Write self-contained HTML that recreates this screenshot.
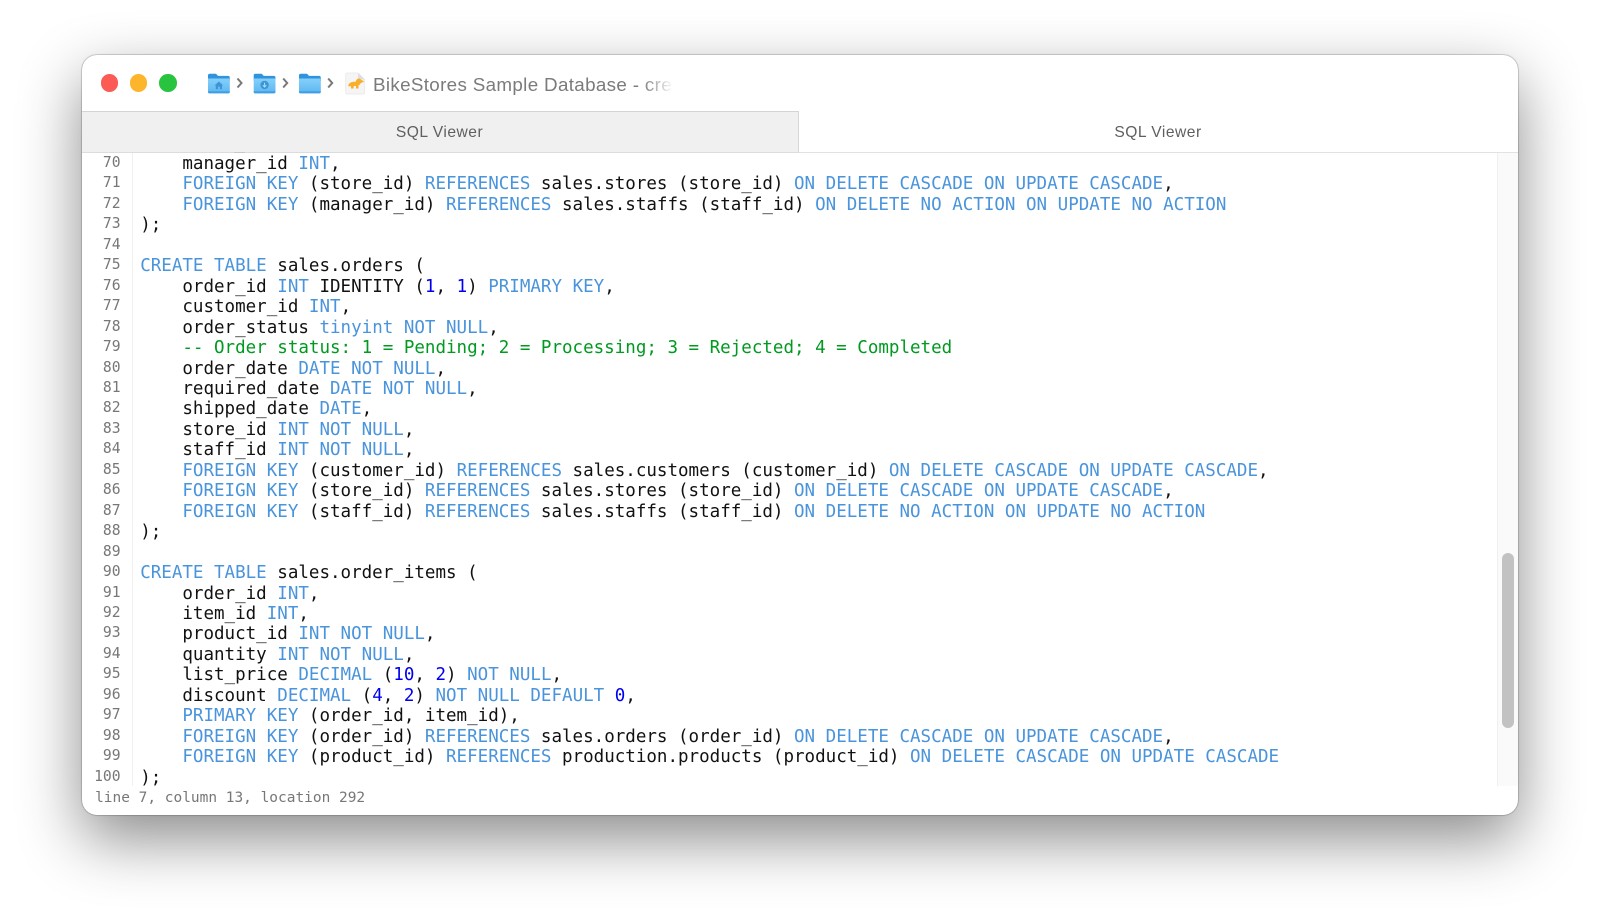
<!DOCTYPE html>
<html><head><meta charset="utf-8">
<style>
html,body{margin:0;padding:0;width:1600px;height:923px;overflow:hidden;background:#fff}
#win{position:absolute;left:81.6px;top:55px;width:1436.9px;height:760px;background:#fff;border-radius:15px;box-shadow:0 24px 62px rgba(0,0,0,.46),0 0 1.5px rgba(0,0,0,.65);overflow:hidden}
.dot{position:absolute;top:19.2px;width:17.6px;height:17.6px;border-radius:50%}
#tab1{position:absolute;left:0;top:56px;width:717.4px;height:42px;background:#f0f0f0;border-top:1px solid #d4d4d4;border-right:1px solid #d8d8d8;box-sizing:border-box}
#sep{position:absolute;left:717px;top:97px;width:720px;height:1px;background:#e2e2e2}
#sep2{position:absolute;left:0;top:97px;width:717px;height:1px;background:#dcdcdc}
#nick{position:absolute;left:152.5px;top:97px;width:11px;height:1px;background:#c8c8c8}
.tabt{position:absolute;top:68.7px;font:15.6px/18px "Liberation Sans",sans-serif;color:#5f5f5f;letter-spacing:.5px;width:200px;text-align:center}
#title{position:absolute;left:291.4px;top:17.5px;width:302px;height:24px;overflow:hidden;font:18.8px/24px "Liberation Sans",sans-serif;color:#7b7b7b;white-space:nowrap;letter-spacing:.34px}
#fade{position:absolute;left:560px;top:17px;width:35px;height:25px;background:linear-gradient(90deg,rgba(255,255,255,0),#fff 90%)}
#gut{position:absolute;left:50.7px;top:98px;width:1px;height:633px;background:#f0f0f0}
#track{position:absolute;left:1415px;top:98px;width:22px;height:633px;background:#fafafa;border-left:1px solid #efefef;box-sizing:border-box}
#thumb{position:absolute;left:1420.4px;top:498.3px;width:11.7px;height:174.7px;border-radius:6px;background:#c2c2c2}
#clip{position:absolute;left:0;top:98px;width:1415px;height:633px;overflow:hidden}
pre{margin:0;position:absolute;white-space:pre;font-family:"DejaVu Sans Mono",monospace}
#code{left:58.6px;top:1px;font-size:17.53px;line-height:20.46px;color:#111}
#nums{left:0;width:39px;top:0;text-align:right;font-size:14.7px;line-height:20.46px;color:#777}
b{font-weight:normal;color:#4a94dc}
i{font-style:normal;color:#0000f0}
u{text-decoration:none;color:#009a20}
#status{left:13.5px;top:733.5px;font-size:14.47px;line-height:18px;color:#777}
</style></head><body>
<div id="win">
<div class="dot" style="left:19px;background:#fb5b54"></div>
<div class="dot" style="left:48.300px;background:#fdb52b"></div>
<div class="dot" style="left:77.700px;background:#29c43f"></div>

<svg style="position:absolute;left:118.4px;top:11px" width="170" height="34" viewBox="0 0 170 34">
<defs><linearGradient id="g" x1="0" y1="0" x2="0" y2="1"><stop offset="0" stop-color="#84d0fa"/><stop offset="1" stop-color="#5db6f1"/></linearGradient></defs>
<g transform="translate(8 7)"><path d="M0 2.500A1.800 1.800 0 0 1 1.800.700H8l2 2.200h10A1.800 1.800 0 0 1 21.800 4.700V8H0z" fill="#2f93de"/><path d="M0 5.500h21.800v13.300a1.500 1.500 0 0 1-1.500 1.500H1.500A1.500 1.500 0 0 1 0 18.800z" fill="url(#g)"/><path d="M0 18.300h21.800v.6a1.500 1.500 0 0 1-1.500 1.500H1.500A1.500 1.500 0 0 1 0 18.900z" fill="#3f9fe2"/><path d="M6.500 12.500l4.400-4 4.400 4h-1.300v3.800h-2.200v-2.500h-1.800v2.500H7.800v-3.800z" fill="#3d95d6"/></g>
<g transform="translate(53.700 7)"><path d="M0 2.500A1.800 1.800 0 0 1 1.800.700H8l2 2.200h10A1.800 1.800 0 0 1 21.800 4.700V8H0z" fill="#2f93de"/><path d="M0 5.500h21.800v13.300a1.500 1.500 0 0 1-1.500 1.500H1.500A1.500 1.500 0 0 1 0 18.800z" fill="url(#g)"/><path d="M0 18.300h21.800v.6a1.500 1.500 0 0 1-1.500 1.500H1.500A1.500 1.500 0 0 1 0 18.900z" fill="#3f9fe2"/><circle cx="10.900" cy="12" r="4.200" fill="#3d95d6"/><path d="M10.900 9.600v4.200M9.100 12.200l1.800 1.800 1.800-1.800" stroke="#a9defb" stroke-width="1" fill="none"/></g>
<g transform="translate(99 7)"><path d="M0 2.500A1.800 1.800 0 0 1 1.800.700H8l2 2.200h10A1.800 1.800 0 0 1 21.800 4.700V8H0z" fill="#2f93de"/><path d="M0 5.500h21.800v13.300a1.500 1.500 0 0 1-1.500 1.500H1.500A1.500 1.500 0 0 1 0 18.800z" fill="url(#g)"/><path d="M0 18.300h21.800v.6a1.500 1.500 0 0 1-1.500 1.500H1.500A1.500 1.500 0 0 1 0 18.900z" fill="#3f9fe2"/></g>
<path d="M37.500 12.500l4 4.500-4 4.500" stroke="#787878" stroke-width="2" fill="none"/>
<path d="M83.200 12.500l4 4.500-4 4.500" stroke="#787878" stroke-width="2" fill="none"/>
<path d="M128.200 12.500l4 4.500-4 4.500" stroke="#787878" stroke-width="2" fill="none"/>
<g transform="translate(145.700 7)">
<path d="M0 1.500A1.500 1.500 0 0 1 1.500 0H12.500L19 6.500V19.500A1.500 1.500 0 0 1 17.500 21H1.500A1.500 1.500 0 0 1 0 19.500z" fill="#f5f5f5" stroke="#e6e6e6" stroke-width=".7"/>
<path d="M12.500 0V6.500H19z" fill="#dedede"/>
<path d="M2.500 14c0-3 1.500-4.500 4-5 1-.3 2.500-.3 3.500-.3.500-2 2-3.500 3.500-3.200 1.500.3 1.500 1.500 4.500 2.500l-.2 1.200c-1.500 0-2.500.5-3 1.300-.5 1-1 1.500-2 1.800v3.200h-2.500v-2.500H8v2.500H5.300v-2.500c-1 .5-2 .5-2.800 0z" fill="#f8b02a"/>
</g>
</svg>
<div id="title">BikeStores Sample Database - create objects</div>
<div id="fade"></div>

<div id="tab1"></div>
<div id="sep2"></div>
<div id="sep"></div>
<div id="nick"></div>
<div class="tabt" style="left:257.900px">SQL Viewer</div>
<div class="tabt" style="left:976.400px">SQL Viewer</div>

<div id="track"></div>
<div id="thumb"></div>
<div id="gut"></div>
<div id="clip">
<pre id="nums">70
71
72
73
74
75
76
77
78
79
80
81
82
83
84
85
86
87
88
89
90
91
92
93
94
95
96
97
98
99
100</pre>
<pre id="code">    manager_id <b>INT</b>,
    <b>FOREIGN KEY</b> (store_id) <b>REFERENCES</b> sales.stores (store_id) <b>ON DELETE CASCADE ON UPDATE CASCADE</b>,
    <b>FOREIGN KEY</b> (manager_id) <b>REFERENCES</b> sales.staffs (staff_id) <b>ON DELETE NO ACTION ON UPDATE NO ACTION</b>
);

<b>CREATE TABLE</b> sales.orders (
    order_id <b>INT</b> IDENTITY (<i>1</i>, <i>1</i>) <b>PRIMARY KEY</b>,
    customer_id <b>INT</b>,
    order_status <b>tinyint NOT NULL</b>,
    <u>-- Order status: 1 = Pending; 2 = Processing; 3 = Rejected; 4 = Completed</u>
    order_date <b>DATE NOT NULL</b>,
    required_date <b>DATE NOT NULL</b>,
    shipped_date <b>DATE</b>,
    store_id <b>INT NOT NULL</b>,
    staff_id <b>INT NOT NULL</b>,
    <b>FOREIGN KEY</b> (customer_id) <b>REFERENCES</b> sales.customers (customer_id) <b>ON DELETE CASCADE ON UPDATE CASCADE</b>,
    <b>FOREIGN KEY</b> (store_id) <b>REFERENCES</b> sales.stores (store_id) <b>ON DELETE CASCADE ON UPDATE CASCADE</b>,
    <b>FOREIGN KEY</b> (staff_id) <b>REFERENCES</b> sales.staffs (staff_id) <b>ON DELETE NO ACTION ON UPDATE NO ACTION</b>
);

<b>CREATE TABLE</b> sales.order_items (
    order_id <b>INT</b>,
    item_id <b>INT</b>,
    product_id <b>INT NOT NULL</b>,
    quantity <b>INT NOT NULL</b>,
    list_price <b>DECIMAL</b> (<i>10</i>, <i>2</i>) <b>NOT NULL</b>,
    discount <b>DECIMAL</b> (<i>4</i>, <i>2</i>) <b>NOT NULL DEFAULT</b> <i>0</i>,
    <b>PRIMARY KEY</b> (order_id, item_id),
    <b>FOREIGN KEY</b> (order_id) <b>REFERENCES</b> sales.orders (order_id) <b>ON DELETE CASCADE ON UPDATE CASCADE</b>,
    <b>FOREIGN KEY</b> (product_id) <b>REFERENCES</b> production.products (product_id) <b>ON DELETE CASCADE ON UPDATE CASCADE</b>
);</pre>
</div>
<pre id="status">line 7, column 13, location 292</pre>
</div>
</body></html>
